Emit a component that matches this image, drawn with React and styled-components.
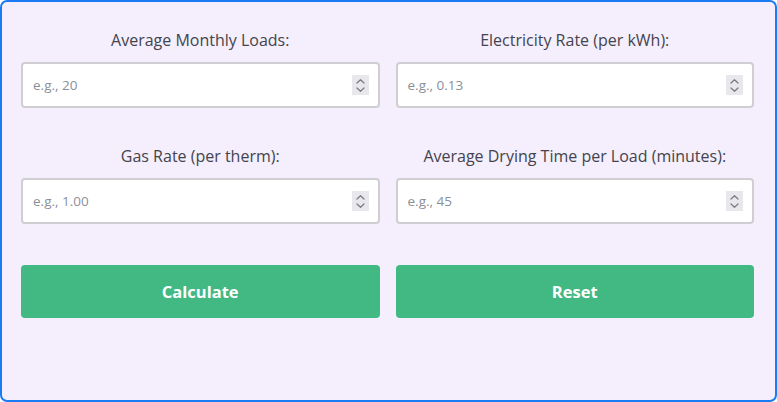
import React, { useState } from 'react';
import styled, { createGlobalStyle } from 'styled-components';

const GlobalStyle = createGlobalStyle`
    html, body {
        margin: 0;
        padding: 0;
        background: #ffffff;
    }
    * {
        box-sizing: border-box;
    }
`;

const Card = styled.div`
    width: 777px;
    height: 402px;
    background: #f4eefd;
    border: 2px solid #1a7cf5;
    border-radius: 7px;
    padding: 26px 21px 0 19px;
    font-family: "Open Sans", "Noto Sans", sans-serif;
`;

const Grid = styled.div`
    display: grid;
    grid-template-columns: 1fr 1fr;
    column-gap: 16px;
    row-gap: 36px;
`;

const Field = styled.div`
    display: flex;
    flex-direction: column;
`;

const Label = styled.label`
    text-align: center;
    font-size: 16px;
    line-height: 24px;
    color: #44444c;
    margin-bottom: 10px;
`;

const InputWrap = styled.div`
    position: relative;
`;

const Input = styled.input`
    width: 100%;
    height: 46px;
    border: 2px solid #cfcfd3;
    border-radius: 4px;
    background: #ffffff;
    padding: 0 40px 0 10px;
    font-family: inherit;
    font-size: 13.5px;
    color: #333;
    outline: none;
    -moz-appearance: textfield;

    &::placeholder {
        color: #8a8f98;
    }
    &::-webkit-outer-spin-button,
    &::-webkit-inner-spin-button {
        -webkit-appearance: none;
        margin: 0;
    }
`;

const Spinner = styled.div`
    position: absolute;
    top: 13px;
    right: 11px;
    width: 17px;
    height: 20px;
    background: #e8e8ec;
    display: flex;
    align-items: center;
    justify-content: center;
`;

const Buttons = styled.div`
    display: grid;
    grid-template-columns: 1fr 1fr;
    column-gap: 16px;
    margin-top: 41px;
`;

const Button = styled.button`
    height: 53px;
    border: none;
    border-radius: 4px;
    background: #42b883;
    color: #ffffff;
    font-family: inherit;
    font-size: 16.5px;
    font-weight: 700;
    cursor: pointer;
`;

const SpinIcon = () => (
    <svg width="11" height="15" viewBox="0 0 11 15" fill="none" stroke="#7b7b85" strokeWidth="1.3" strokeLinecap="round" strokeLinejoin="round">
        <path d="M2 5 L5.5 1.8 L9 5" />
        <path d="M2 10 L5.5 13.2 L9 10" />
    </svg>
);

const fields = [
    { id: 'loads', label: 'Average Monthly Loads:', placeholder: 'e.g., 20' },
    { id: 'elec', label: 'Electricity Rate (per kWh):', placeholder: 'e.g., 0.13' },
    { id: 'gas', label: 'Gas Rate (per therm):', placeholder: 'e.g., 1.00' },
    { id: 'time', label: 'Average Drying Time per Load (minutes):', placeholder: 'e.g., 45' },
];

const App = () => {
    const [values, setValues] = useState({});

    const handleChange = (id) => (e) => {
        setValues(prev => ({ ...prev, [id]: e.target.value }));
    };

    const handleReset = () => {
        setValues({});
    };

    return (
        <>
            <GlobalStyle />
            <Card>
                <Grid>
                    {fields.map(f => (
                        <Field key={f.id}>
                            <Label htmlFor={f.id}>{f.label}</Label>
                            <InputWrap>
                                <Input
                                    id={f.id}
                                    type="number"
                                    placeholder={f.placeholder}
                                    value={values[f.id] || ''}
                                    onChange={handleChange(f.id)}
                                />
                                <Spinner><SpinIcon /></Spinner>
                            </InputWrap>
                        </Field>
                    ))}
                </Grid>
                <Buttons>
                    <Button type="button">Calculate</Button>
                    <Button type="button" onClick={handleReset}>Reset</Button>
                </Buttons>
            </Card>
        </>
    );
};

export default App;
